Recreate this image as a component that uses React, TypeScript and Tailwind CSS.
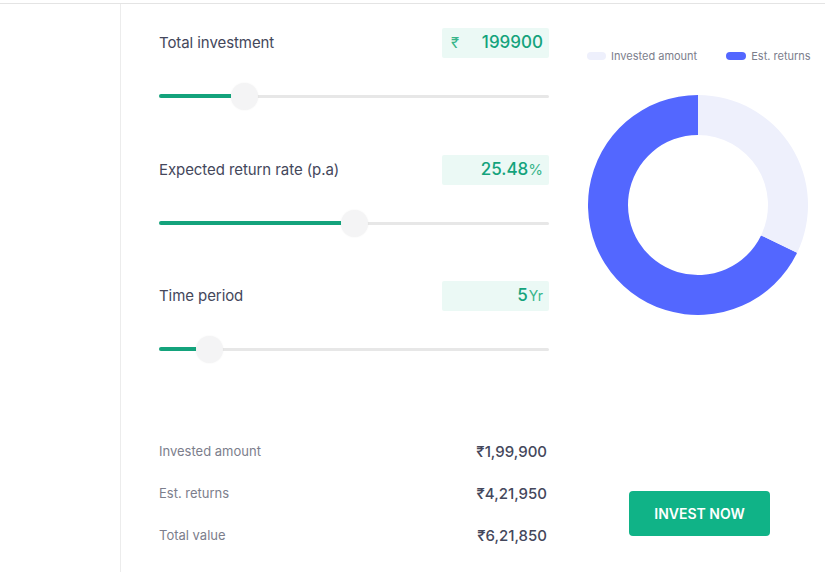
import React from "react";

const font = { fontFamily: "Inter, 'Noto Sans', sans-serif" };

function Slider({ fill }: { fill: number }) {
  return (
    <div className="relative h-[28px] flex items-center">
      <div className="w-full h-[3px] bg-[#e7e7e7] rounded-full" />
      <div
        className="absolute left-0 h-[4px] bg-[#14a37c] rounded-l-full"
        style={{ width: fill }}
      />
      <div
        className="absolute w-[27px] h-[27px] rounded-full bg-[#f4f4f5] shadow-[0_0_2px_rgba(0,0,0,0.06)]"
        style={{ left: fill }}
      />
    </div>
  );
}

function Section({
  label,
  box,
  fill,
  gapAfter,
}: {
  label: string;
  box: React.ReactNode;
  fill: number;
  gapAfter: string;
}) {
  return (
    <div className={`flex flex-col ${gapAfter}`}>
      <div className="flex items-center justify-between h-[30px]">
        <span className="text-[15px] text-[#44475b] pt-[1px] tracking-[-0.005em]">{label}</span>
        <div className="w-[107px] h-[30px] bg-[#ebf9f5] rounded-[2px] flex items-center px-[6px]">
          {box}
        </div>
      </div>
      <div className="mt-[24px]">
        <Slider fill={fill} />
      </div>
    </div>
  );
}

function Row({ label, value }: { label: string; value: string }) {
  return (
    <div className="h-[42px] flex items-center justify-between pr-[2px]">
      <span className="text-[13px] text-[#7c7e8c]">{label}</span>
      <span className="text-[15px] font-medium text-[#44475b]">{value}</span>
    </div>
  );
}

export default function App() {
  return (
    <div className="w-[825px] h-[572px] bg-white overflow-hidden pt-[3px]" style={font}>
      <div className="border-t border-[#e4e4e4] flex h-[569px]">
        <div className="w-[121px] shrink-0 border-r border-[#ececec]" />
        <div className="flex pl-[38px]">
          <div className="w-[390px] flex flex-col pt-[24px]">
            <Section
              label="Total investment"
              gapAfter="mb-[45px]"
              fill={72}
              box={
                <div className="flex w-full items-center justify-between">
                  <span className="text-[15px] text-[#38b58a] pl-[3px]">₹</span>
                  <span className="text-[17px] font-medium text-[#14a37c]">199900</span>
                </div>
              }
            />
            <Section
              label="Expected return rate (p.a)"
              gapAfter="mb-[44px]"
              fill={182}
              box={
                <div className="flex w-full items-baseline justify-end">
                  <span className="text-[17px] font-medium text-[#14a37c]">25.48</span>
                  <span className="text-[15px] text-[#38b58a]">%</span>
                </div>
              }
            />
            <Section
              label="Time period"
              gapAfter="mb-[68px]"
              fill={37}
              box={
                <div className="flex w-full items-baseline justify-end">
                  <span className="text-[17px] font-medium text-[#14a37c] mr-[1px]">5</span>
                  <span className="text-[14px] text-[#38b58a]">Yr</span>
                </div>
              }
            />
            <div className="flex flex-col">
              <Row label="Invested amount" value="₹1,99,900" />
              <Row label="Est. returns" value="₹4,21,950" />
              <Row label="Total value" value="₹6,21,850" />
            </div>
          </div>
          <div className="ml-[38px] w-[238px] flex flex-col pt-[44px]">
            <div className="flex items-center h-[16px] text-[11px] text-[#7c7e8c]">
              <span className="w-[19px] h-[8px] rounded-full bg-[#eef0fc] mr-[5px]" />
              <span>Invested amount</span>
              <span className="w-[20px] h-[8px] rounded-full bg-[#5367ff] ml-[29px] mr-[5px]" />
              <span>Est. returns</span>
            </div>
            <div className="mt-[31px] ml-[1px]">
              <svg width="220" height="220" viewBox="0 0 220 220">
                <path
                  d="M209.09 157.76 A110 110 0 1 1 110 0 L110 40 A70 70 0 1 0 173.06 140.39 Z"
                  fill="#5367ff"
                />
                <path
                  d="M110 0 A110 110 0 0 1 209.09 157.76 L173.06 140.39 A70 70 0 0 0 110 40 Z"
                  fill="#eef0fc"
                />
              </svg>
            </div>
            <div className="mt-[176px] ml-[42px]">
              <button className="w-[141px] h-[45px] rounded-[4px] bg-[#10b387] text-white text-[14px] font-semibold">
                INVEST NOW
              </button>
            </div>
          </div>
        </div>
      </div>
    </div>
  );
}
